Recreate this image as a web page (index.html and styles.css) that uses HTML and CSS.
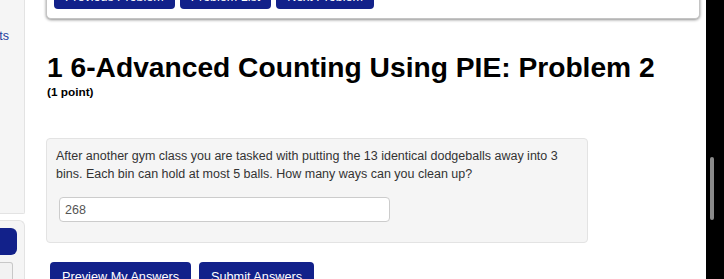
FILE: index.html
```html
<!DOCTYPE html>
<html>
<head>
<meta charset="utf-8">
<link rel="stylesheet" href="styles.css">
</head>
<body>
<div class="page">
  <aside class="sidebar">
    <div class="side-box side-top">
      <a class="side-link" href="#">Problem Sets</a>
    </div>
    <div class="side-box side-bottom">
      <div class="side-btn"><span>Go</span></div>
      <div class="side-ctl"></div>
    </div>
  </aside>
  <main class="main">
    <nav class="nav-box">
      <a class="btn" href="#">Previous Problem</a>
      <a class="btn" href="#">Problem List</a>
      <a class="btn" href="#">Next Problem</a>
    </nav>
    <h1 class="title">1 6-Advanced Counting Using PIE: Problem 2</h1>
    <div class="points">(1 point)</div>
    <div class="problem">
      <p class="problem-text">After another gym class you are tasked with putting the 13 identical dodgeballs away into 3 bins. Each bin can hold at most 5 balls. How many ways can you clean up?</p>
      <input class="answer" type="text" value="268">
    </div>
    <div class="actions">
      <a class="btn btn-lg" href="#">Preview My Answers</a>
      <a class="btn btn-lg" href="#">Submit Answers</a>
    </div>
  </main>
  <div class="scrollbar"><div class="thumb"></div></div>
</div>
</body>
</html>
```
FILE: styles.css
```css
html, body {
  margin: 0;
  padding: 0;
  background: #fff;
  overflow: hidden;
}
body {
  font-family: "Liberation Sans", Arial, sans-serif;
  color: #000;
}
.page {
  display: flex;
  width: 724px;
  height: 279px;
  overflow: hidden;
}
.sidebar {
  width: 25px;
  flex: none;
  display: flex;
  flex-direction: column;
}
.side-box {
  background: #f5f5f5;
  border: 1px solid #e3e3e3;
  border-left: none;
  box-sizing: border-box;
}
.side-top {
  height: 214px;
  flex: none;
  border-top: none;
  display: flex;
  justify-content: flex-end;
  padding-top: 28px;
  padding-right: 15px;
  overflow: hidden;
  border-bottom-right-radius: 2px;
}
.side-link {
  color: #1d3d9e;
  text-decoration: none;
  font-size: 12.5px;
  line-height: 16px;
  white-space: nowrap;
  height: 16px;
}
.side-bottom {
  margin-top: 6px;
  flex: 1;
  border-top-right-radius: 6px;
  border-bottom: none;
  padding-top: 7px;
  overflow: hidden;
}
.side-btn {
  width: 17px;
  height: 27px;
  background: #12218a;
  border-radius: 0 6px 6px 0;
  color: transparent;
  font-size: 1px;
  overflow: hidden;
}
.side-ctl {
  margin-top: 7px;
  width: 12px;
  height: 30px;
  background: #f2f2f2;
  border: 1px solid #c8c8c8;
  border-left: none;
  border-radius: 0 3px 3px 0;
}
.main {
  flex: 1;
  padding-left: 21px;
  padding-right: 6px;
  display: flex;
  flex-direction: column;
  align-items: flex-start;
  min-width: 0;
}
.main > * {
  flex: none;
}
.nav-box {
  align-self: stretch;
  margin-top: -40px;
  height: 59px;
  box-sizing: border-box;
  background: #fff;
  border: 1px solid #c4c4c4;
  border-top: none;
  border-radius: 0 0 5px 5px;
  box-shadow: 0 1px 3px rgba(0, 0, 0, 0.45);
  display: flex;
  align-items: flex-end;
  gap: 5px;
  padding: 0 0 9px 7px;
}
.btn {
  display: block;
  background: #12218a;
  color: #fff;
  text-decoration: none;
  font-size: 12.5px;
  line-height: 18px;
  padding: 11px 11px 3px;
  border-radius: 4px;
  white-space: nowrap;
}
.title {
  margin: 32px 0 0 1px;
  font-size: 28.2px;
  line-height: 32px;
  font-weight: bold;
  white-space: nowrap;
}
.points {
  margin: 2px 0 0 1px;
  font-size: 11.8px;
  line-height: 14px;
  font-weight: bold;
}
.problem {
  margin-top: 39px;
  width: 542px;
  box-sizing: border-box;
  background: #f5f5f5;
  border: 1px solid #e3e3e3;
  border-radius: 4px;
  padding: 8px 9px 20px;
}
.problem-text {
  margin: 0;
  font-size: 12.5px;
  line-height: 18px;
  color: #333;
}
.answer {
  display: block;
  margin: 14px 0 0 3px;
  width: 331px;
  height: 25px;
  box-sizing: border-box;
  border: 1px solid #ccc;
  border-radius: 4px;
  background: #fff;
  padding: 0 5px;
  font-family: "Liberation Sans", Arial, sans-serif;
  font-size: 12.5px;
  color: #555;
  outline: none;
}
.actions {
  margin: 19px 0 0 4px;
  display: flex;
  gap: 8px;
}
.btn-lg {
  padding: 5px 12px 6px;
  font-size: 12.7px;
  line-height: 20px;
}
.scrollbar {
  width: 18px;
  flex: none;
  background: #000;
  padding-top: 157px;
  box-sizing: border-box;
}
.thumb {
  margin-left: 4px;
  width: 4px;
  height: 63px;
  background: #8a8a8a;
  border-radius: 2px;
}
```
